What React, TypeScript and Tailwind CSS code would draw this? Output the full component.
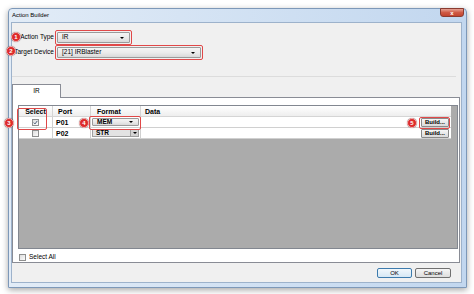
import React from "react";

function Badge({ n, x, y }: { n: number; x: number; y: number }) {
  return (
    <div
      className="absolute w-[10px] h-[10px] rounded-full bg-[#dd2b2b] border border-[#f3b0b0] text-white text-[6px] font-bold flex items-center justify-center leading-none shadow-[0_0_1px_rgba(0,0,0,0.5)]"
      style={{ left: x - 5, top: y - 5 }}
    >
      {n}
    </div>
  );
}

function Arrow() {
  return <div className="w-0 h-0 border-l-[2px] border-r-[2px] border-t-[2px] border-l-transparent border-r-transparent border-t-black" />;
}

function Combo({ text, bold }: { text: string; bold?: boolean }) {
  return (
    <div className="flex-1 h-full border border-[#9a9a9a] rounded-[1px] bg-gradient-to-b from-[#f4f4f4] via-[#ebebeb] to-[#d9d9d9] flex items-center pl-[4px] pr-[5px]">
      <span className={"flex-1 text-[6.5px] leading-none text-black " + (bold ? "font-bold" : "")}>{text}</span>
      <Arrow />
    </div>
  );
}

function Check({ checked }: { checked?: boolean }) {
  return (
    <div className="w-[7px] h-[7px] border border-[#8e8f8f] bg-gradient-to-br from-[#dedede] to-[#fbfbfb] flex items-center justify-center">
      {checked && (
        <svg width="5" height="5" viewBox="0 0 10 10">
          <path d="M1.5 5.2 L4 7.8 L8.6 1.8" fill="none" stroke="#3a4f6b" strokeWidth="1.8" />
        </svg>
      )}
    </div>
  );
}

export default function App() {
  return (
    <div
      className="relative w-[474px] h-[294px] bg-white pt-[8px] pl-[8px] overflow-hidden"
      style={{ fontFamily: '"Liberation Sans", Arial, sans-serif' }}
    >
      <div className="w-[459px] h-[280px] flex flex-col rounded-t-[4px] border border-[#7d98b8] bg-gradient-to-r from-[#e2ecf7] to-[#c2d7ef] pl-[2px] pr-[4px] pb-[4px] shadow-[0_2px_6px_rgba(0,0,0,0.35)]">
        {/* title bar */}
        <div className="h-[13px] flex items-start">
          <div className="pl-[1px] pt-[3px] text-[6px] leading-none text-black">Action Builder</div>
          <div className="ml-auto -mt-[1px] -mr-[2px] w-[24px] h-[9px] rounded-b-[3px] border border-[#8a3b30] bg-gradient-to-b from-[#e4a194] via-[#cf5a45] to-[#c2442f] flex items-center justify-center text-white text-[6px] font-bold leading-none">
            x
          </div>
        </div>
        {/* client */}
        <div className="flex-1 bg-[#f0f0f0] border border-[#9db2cb] flex flex-col">
          <div className="mt-[7px] h-[15px] flex">
            <div className="w-[43px] flex items-center justify-end pr-[1px] text-[6.5px] leading-none">Action Type</div>
            <div className="w-[77px] h-[15px] border-[1.5px] border-[#e04848] rounded-[2px] p-[1px] flex">
              <Combo text="IR" />
            </div>
          </div>
          <div className="h-[15px] flex">
            <div className="w-[43px] flex items-center justify-end pr-[1px] text-[6.5px] leading-none">Target Device</div>
            <div className="w-[148px] h-[15px] border-[1.5px] border-[#e04848] rounded-[2px] p-[1px] flex">
              <Combo text="[21] IRBlaster" />
            </div>
          </div>
          <div className="mt-[16px] h-px w-[444px] bg-[#dcdcdc]" />
          {/* tab */}
          <div className="mt-[7px] relative z-10 -mb-px w-[49px] h-[14px] border border-b-0 border-[#898c95] bg-white flex items-center justify-center text-[6.5px] leading-none">
            IR
          </div>
          <div className="w-[448px] h-[166px] border border-[#898c95] bg-white flex flex-col pt-[7px] pl-[5px]">
            {/* grid */}
            <div className="w-[440px] h-[144px] border border-[#828790] bg-[#ababab] flex flex-col">
              <div className="w-[432px] h-[11px] flex bg-gradient-to-b from-[#ffffff] to-[#eeeeee] border-b border-[#d5d5d5] text-[7px] font-bold leading-none">
                <div className="w-[34px] flex items-center justify-center border-r border-[#d5d5d5]">Select</div>
                <div className="w-[38px] flex items-center pl-[5px] border-r border-[#d5d5d5]">Port</div>
                <div className="w-[50px] flex items-center pl-[6px] border-r border-[#d5d5d5]">Format</div>
                <div className="w-[278px] flex items-center pl-[4px]">Data</div>
                <div className="w-[32px]" />
              </div>
              {[
                { c: true, p: "P01", f: "MEM" },
                { c: false, p: "P02", f: "STR" },
              ].map((r, i) => (
                <div key={i} className="w-[432px] h-[11px] flex bg-white border-b border-[#d0d0d0] text-[7px] font-bold leading-none">
                  <div className="w-[34px] flex items-center justify-center border-r border-[#d0d0d0]">
                    <Check checked={r.c} />
                  </div>
                  <div className="w-[38px] flex items-center pl-[3px] border-r border-[#d0d0d0]">{r.p}</div>
                  <div className="w-[50px] flex items-stretch p-[1px] border-r border-[#d0d0d0]">
                    {i === 0 ? (
                      <Combo text={r.f} bold />
                    ) : (
                      <div className="flex-1 border border-[#a0a0a0] bg-[#e3e3e3] flex items-center">
                        <span className="flex-1 pl-[3px] text-[6.5px]">{r.f}</span>
                        <div className="w-[8px] h-full border-l border-[#a0a0a0] bg-[#d4d4d4] flex items-center justify-center">
                          <Arrow />
                        </div>
                      </div>
                    )}
                  </div>
                  <div className="w-[278px]" />
                  <div className="w-[32px] flex items-center justify-start pl-[2px]">
                    <div className="w-[28px] h-[9px] border border-[#8a8a8a] rounded-[1px] bg-gradient-to-b from-[#f6f6f6] to-[#dadada] flex items-center justify-center text-[6px] font-bold leading-none">
                      Build...
                    </div>
                  </div>
                </div>
              ))}
            </div>
            <div className="mt-[5px] flex items-center gap-[3px] pl-[1px]">
              <Check />
              <span className="text-[6.5px] leading-none">Select All</span>
            </div>
          </div>
          <div className="mt-[5px] flex justify-end pr-[10px] gap-[3px]">
            <div className="w-[35px] h-[10px] border border-[#3d7bad] rounded-[2px] bg-gradient-to-b from-[#f2f8fc] to-[#d6e8f5] flex items-center justify-center text-[6px] leading-none">OK</div>
            <div className="w-[36px] h-[10px] border border-[#707070] rounded-[2px] bg-gradient-to-b from-[#f6f6f6] to-[#dddddd] flex items-center justify-center text-[6px] leading-none">Cancel</div>
          </div>
        </div>
      </div>

      {/* highlight boxes */}
      <div className="absolute left-[17px] top-[108px] w-[30px] h-[22px] border-[1.5px] border-[#e04848] rounded-[2px]" />
      <div className="absolute left-[89px] top-[116px] w-[52px] h-[14px] border-[1.5px] border-[#e04848] rounded-[2px]" />
      <div className="absolute left-[419px] top-[117px] w-[31px] h-[12px] border-[1.5px] border-[#e04848] rounded-[2px]" />

      <Badge n={1} x={16} y={37} />
      <Badge n={2} x={11} y={51} />
      <Badge n={3} x={9} y={123} />
      <Badge n={4} x={84} y={123} />
      <Badge n={5} x={412} y={123} />
    </div>
  );
}
